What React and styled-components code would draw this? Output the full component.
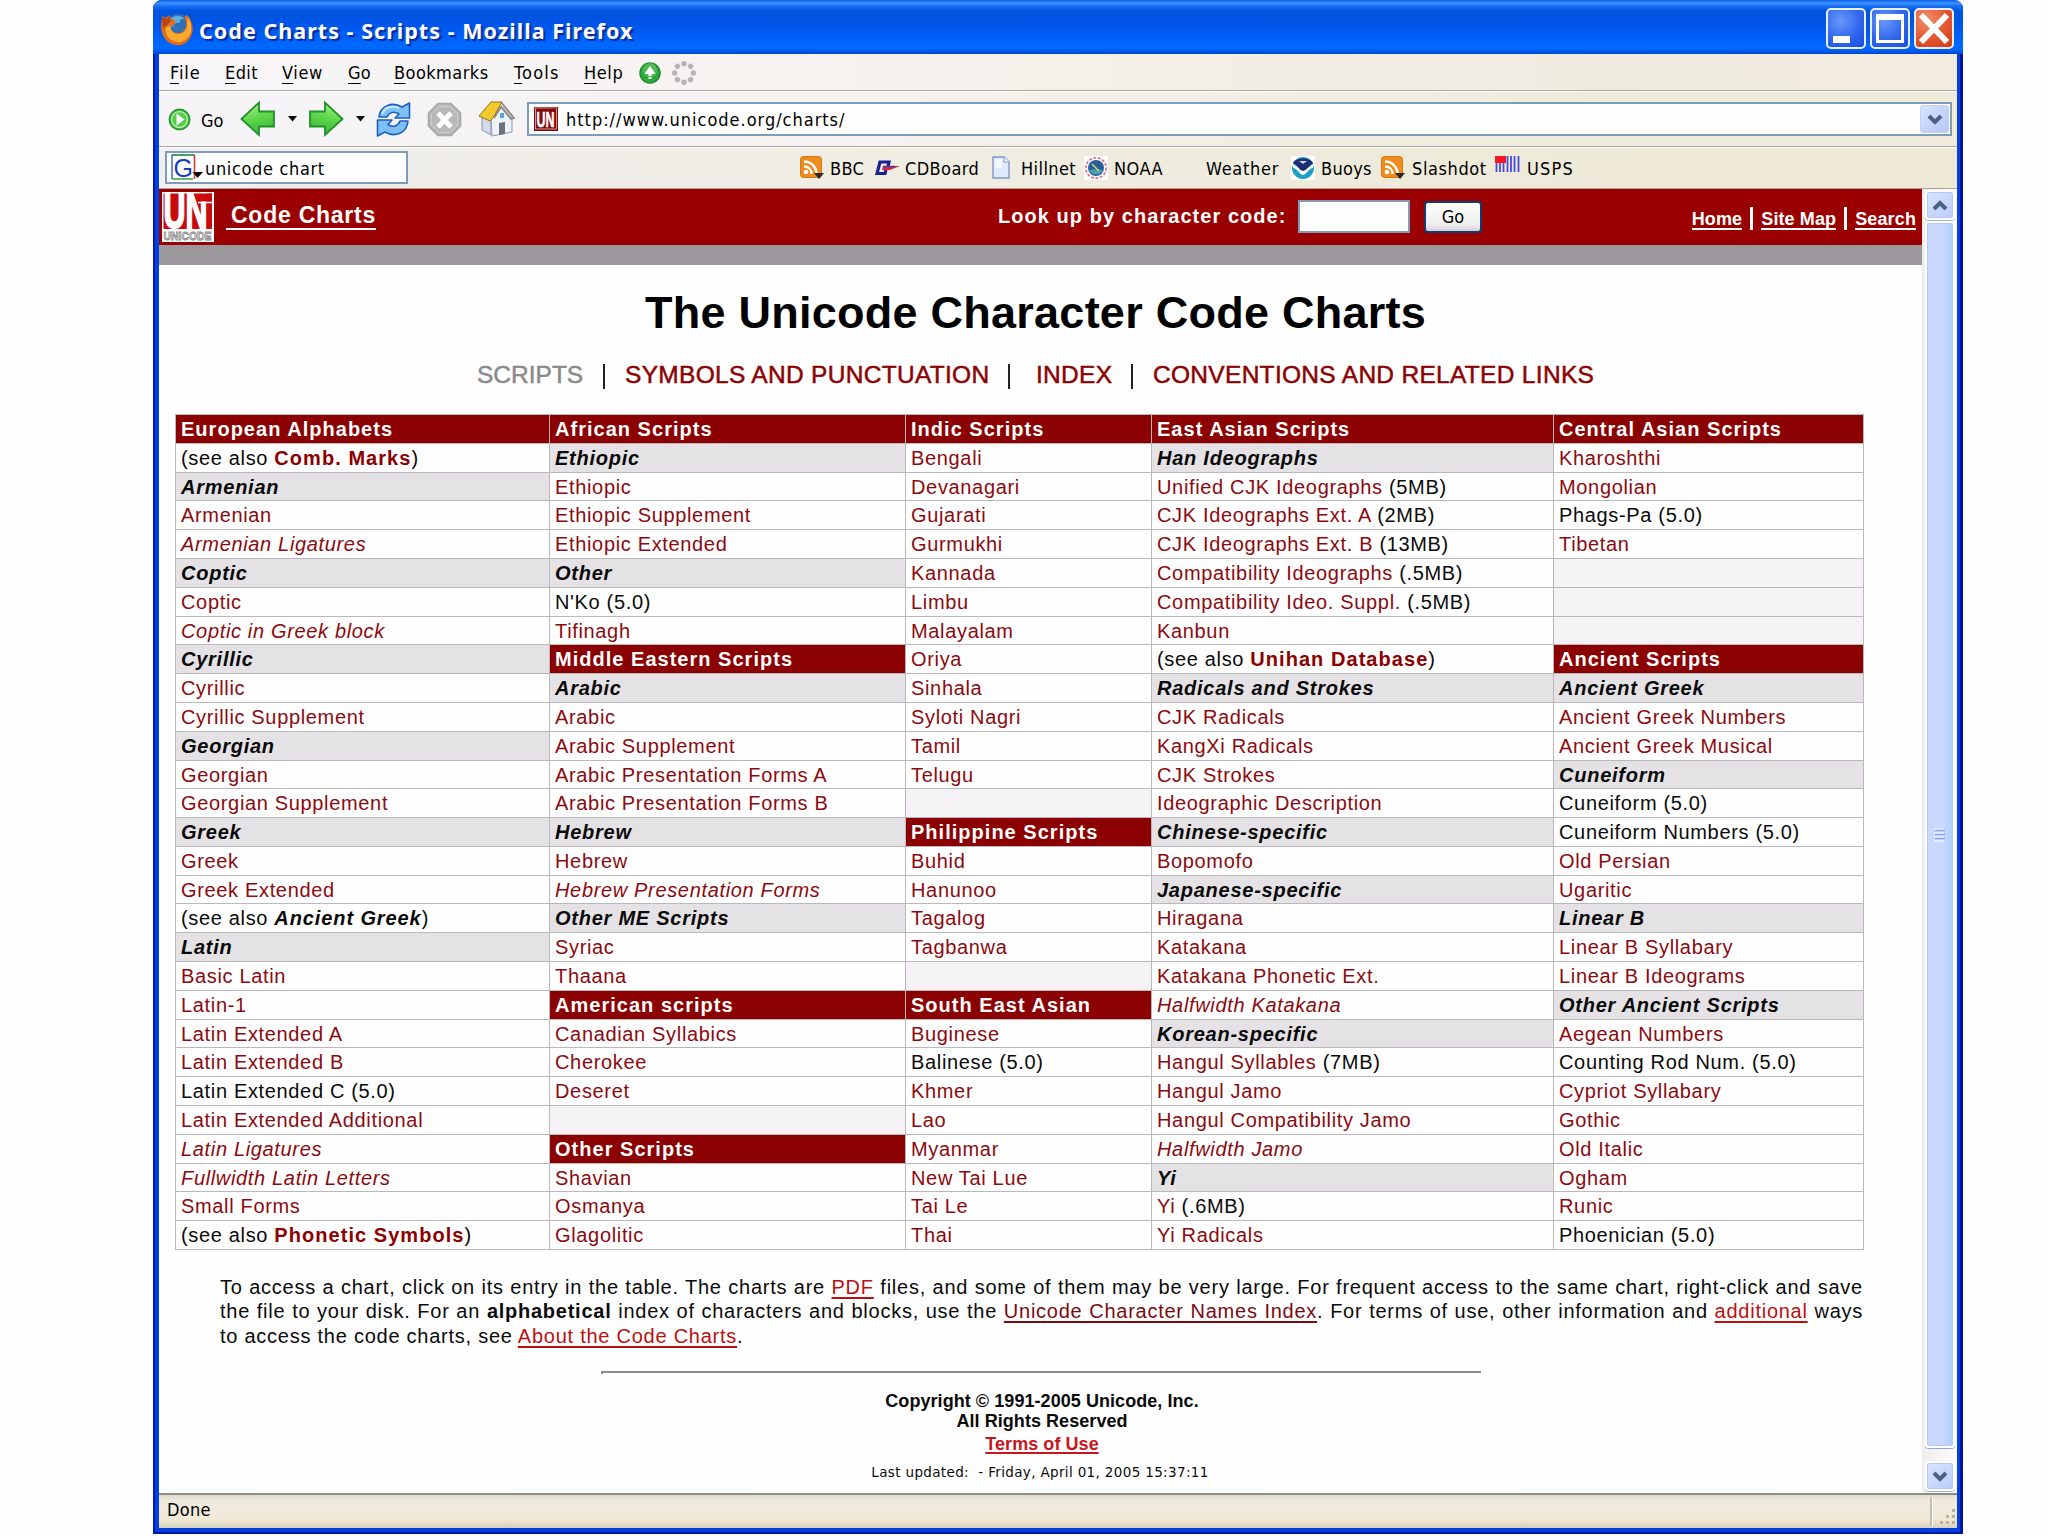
import React from 'react';
import styled, { createGlobalStyle, css } from 'styled-components';

const GlobalStyle = createGlobalStyle`
    body {
        margin: 0;
        background: #fefefe;
    }

    * {
        box-sizing: border-box;
    }

    svg {
        overflow: visible;
    }
`;

const UI_FONT = "'DejaVu Sans Condensed', 'DejaVu Sans', sans-serif";
const PAGE_FONT = "'Liberation Sans', Arial, sans-serif";

/* Window frame */

const Desktop = styled.div`
    width: 2048px;
    height: 1536px;
    overflow: hidden;
    padding: 0 85px 2px 153px;
    background: #fefefe;
`;

const Window = styled.div`
    display: flex;
    flex-direction: column;
    height: 1534px;
    padding: 0 6px 6px;
    border-radius: 9px 9px 0 0;
    overflow: hidden;
    background: #0440dc;
    box-shadow: inset 2px 0 0 #0119b4, inset -3px -2px 0 #0014a4;
`;

const TitleBar = styled.div`
    display: flex;
    align-items: center;
    flex: none;
    height: 54px;
    margin: 0 -6px;
    padding: 4px 9px 0 8px;
    background: linear-gradient(
        #0a5be8 0,
        #3b93ff 3px,
        #1a70f5 6px,
        #0054dc 11px,
        #0054e6 22px,
        #005cf5 34px,
        #0068ff 45px,
        #0066fb 49px,
        #0046d0 54px
    );
`;

const Title = styled.div`
    flex: 1;
    padding: 4px 0 0 6px;
    font: bold 21.5px/30px 'Noto Sans', sans-serif;
    letter-spacing: 1.03px;
    color: #fff;
    text-shadow: 2px 2px 1px #0a2a9a;
    white-space: pre;
`;

const WindowButtons = styled.div`
    display: flex;
    gap: 4px;
`;

const WindowButton = styled.div`
    width: 40px;
    height: 41px;
    margin-top: -1px;
    border: 2px solid #e8f0ff;
    border-radius: 5px;
    background: ${p =>
        p.$close
            ? 'radial-gradient(circle at 30% 25%, #f0906c, #e25530 55%, #cf3c10)'
            : 'radial-gradient(circle at 35% 30%, #6b97fa, #2f66ec 55%, #1a4fdc)'};
`;

/* Toolbars */

const MenuBar = styled.div`
    display: flex;
    align-items: center;
    flex: none;
    height: 36px;
    padding: 2px 0 0 11px;
    background: linear-gradient(90deg, #f8f5f9, #f5f2ee 40%, #f0ebdf 80%, #f1ebe0);
    font: 18px/22px ${UI_FONT};
`;

const MenuItem = styled.div`
    width: ${p => p.$width}px;
    letter-spacing: ${p => p.$spacing || 0}px;

    &::first-letter {
        text-decoration: underline;
        text-decoration-thickness: 1px;
        text-underline-offset: 4px;
    }
`;

const Spinner = styled.div`
    margin-left: 11px;
    height: 24px;
`;

const NavBar = styled.div`
    display: flex;
    align-items: center;
    flex: none;
    height: 56px;
    padding: 1px 5px 0 9px;
    border-top: 1px solid #a9a79c;
    box-shadow: inset 0 1px 0 #fff;
    background: linear-gradient(90deg, #f7f4f8, #f5f2ef 40%, #efead9 85%);
    font: 18px/22px ${UI_FONT};
`;

const GoLabel = styled.span`
    width: 39px;
    margin-left: 10px;
    padding-top: 3px;
`;

const NavIcon = styled.div`
    display: flex;
    width: ${p => p.$width}px;
`;

const UrlField = styled.div`
    display: flex;
    align-items: center;
    flex: 1;
    height: 34px;
    padding: 0 3px 0 5px;
    border: 2px solid #7f9db9;
    background: #fefefe;
`;

const Url = styled.span`
    flex: 1;
    padding: 1px 0 0 8px;
    letter-spacing: 0.98px;
`;

const DropButton = styled.div`
    display: flex;
    align-items: center;
    justify-content: center;
    width: 29px;
    height: 28px;
    margin-right: -2px;
    border-radius: 3px;
    background: linear-gradient(135deg, #d6e2ff, #b7c8f6);
    border: 1px solid #c3d1f5;
`;

const BookmarksBar = styled.div`
    display: flex;
    align-items: center;
    flex: none;
    height: 43px;
    padding: 0 0 0 6px;
    border-top: 1px solid #a9a79c;
    border-bottom: 1px solid #b3a294;
    box-shadow: inset 0 1px 0 #fff;
    background: linear-gradient(90deg, #f1eff0, #efece0 50%, #eee9d6 90%);
    font: 18px/22px ${UI_FONT};
`;

const SearchBox = styled.div`
    display: flex;
    align-items: center;
    width: 243px;
    height: 33px;
    margin-right: 392px;
    padding-left: 4px;
    border: 2px solid #7f9db9;
    background: #fefefe;
`;

const SearchText = styled.span`
    padding: 2px 0 0 1px;
    letter-spacing: 0.65px;
`;

const Bookmark = styled.div`
    display: flex;
    align-items: center;
    width: ${p => p.$width}px;
    white-space: nowrap;

    svg {
        flex: none;
    }
`;

const BookmarkLabel = styled.span`
    margin-left: ${p => p.$gap}px;
    padding-top: 2px;
    letter-spacing: ${p => p.$spacing || 0}px;
`;

/* Page */

const Viewport = styled.div`
    display: flex;
    flex: none;
    height: 1304px;
    background: #fefefe;
    font-family: ${PAGE_FONT};
`;

const Page = styled.div`
    width: 1763px;
`;

const Banner = styled.div`
    display: flex;
    align-items: flex-start;
    height: 56px;
    padding: 3px 6px 0 3px;
    background: #9b0000;
    color: #fff;
    font-weight: bold;
`;

const BannerTitle = styled.a`
    width: 772px;
    margin: 9px 0 0 12px;
    font-size: 23px;
    line-height: 28px;
    letter-spacing: 0.75px;

    span {
        display: inline-block;
        height: 29px;
        padding: 0 0 0 5px;
        border-bottom: 2px solid #fff;
    }
`;

const LookupLabel = styled.label`
    width: 300px;
    margin-top: 10px;
    font-size: 20px;
    line-height: 28px;
    letter-spacing: 1.05px;
    white-space: nowrap;
`;

const LookupInput = styled.div`
    width: 112px;
    height: 33px;
    margin: 8px 14px 0 0;
    border: 2px solid #7f9db9;
    background: #fefefe;
`;

const LookupButton = styled.div`
    width: 58px;
    height: 32px;
    margin: 9px 0 0;
    border: 2px solid #123c70;
    border-radius: 4px;
    background: linear-gradient(#fefefe, #f0eff0 75%, #d3cfd8);
    color: #000;
    font: 18px/28px ${UI_FONT};
    text-align: center;
`;

const BannerLinks = styled.div`
    display: flex;
    flex: 1;
    justify-content: flex-end;
    margin-top: 15px;
    font-size: 18px;
    line-height: 24px;
    letter-spacing: 0.12px;

    a {
        height: 23px;
        border-bottom: 2px solid #fff;
    }

    i {
        width: 3px;
        height: 23px;
        margin: 0 8px;
        background: #fff;
    }
`;

const GreyStrip = styled.div`
    height: 20px;
    background: #9a989b;
`;

const Heading = styled.h1`
    margin: 20px 0 0;
    font-size: 45px;
    line-height: 56px;
    letter-spacing: 0.25px;
    text-align: center;
    text-indent: -10px;
`;

const Sections = styled.nav`
    display: flex;
    height: 30px;
    margin: 18px 0 25px 318px;
    font-size: 24.5px;
    line-height: 31px;
    white-space: nowrap;
`;

const Section = styled.a`
    width: ${p => p.$width}px;
    letter-spacing: ${p => p.$spacing}px;
    color: ${p => (p.$current ? '#8b898c' : '#8a0305')};
    -webkit-text-stroke: 0.5px;
`;

const Bar = styled.i`
    width: 2px;
    height: 25px;
    margin: 5px ${p => (p.$wide ? 26 : 20)}px 0 0;
    background: #222;
`;

const Charts = styled.div`
    display: grid;
    grid-template-columns: 374px 356px 246px 402px 310px;
    width: 1689px;
    height: 836px;
    margin-left: 16px;
    border-left: 1px solid #bab8ba;
    border-top: 1px solid #bab8ba;
`;

const Column = styled.div`
    display: grid;
    grid-template-rows: repeat(29, 1fr);
    min-height: 0;
`;

const kinds = {
    head: css`
        background: #8b0000;
        color: #fff;
        font-weight: bold;
        letter-spacing: 1.02px;
    `,
    group: css`
        background: #e4e2e5;
        color: #0a0a0a;
        font-weight: bold;
        font-style: italic;
        letter-spacing: 0.75px;
    `,
    link: css`
        color: #8b0a10;
    `,
    slanted: css`
        color: #8b0a10;
        font-style: italic;
    `,
    plain: css`
        color: #0a0a0a;
    `,
    empty: css`
        background: #f5f2f5;
    `,
};

const Cell = styled.div`
    min-height: 0;
    padding-left: 5px;
    border-right: 1px solid #bab8ba;
    border-bottom: 1px solid #bab8ba;
    font-size: 20px;
    line-height: 28px;
    letter-spacing: 0.66px;
    white-space: pre;
    overflow: hidden;
    ${p => kinds[p.$kind]}
`;

const Note = styled.span`
    color: #0a0a0a;
`;

const SeeAlso = styled.b`
    color: ${p => (p.$current ? '#0a0a0a' : '#8b0000')};
    font-style: ${p => (p.$current ? 'italic' : 'normal')};
    letter-spacing: ${p => (p.$current ? 0.9 : 1.05)}px;
`;

const Intro = styled.div`
    width: 1643px;
    margin: 25px 0 0 61px;
    font-size: 20px;
    letter-spacing: 0.75px;
    color: #0a0a0a;
`;

const Line = styled.div`
    height: 24.3px;
    line-height: 24px;
    white-space: nowrap;
    text-align: justify;
    text-align-last: ${p => (p.$last ? 'left' : 'justify')};
`;

const TextLink = styled.a`
    color: ${p => (p.$visited ? '#7a0a10' : '#bb1010')};
    text-decoration: underline;
    text-decoration-thickness: 2px;
    text-underline-offset: 3px;
`;

const Rule = styled.div`
    width: 880px;
    height: 3px;
    margin: 23px 0 0 442px;
    border-top: 2px solid #8d8b8d;
    border-left: 2px solid #8d8b8d;
`;

const Footer = styled.footer`
    margin: 17px 0 0 883px;
    width: 0;
    display: flex;
    flex-direction: column;
    align-items: center;
    white-space: pre;
    font-size: 18px;
    font-weight: bold;
    line-height: 20px;
    letter-spacing: 0.06px;
    color: #0a0a0a;
`;

const Terms = styled.a`
    margin-top: 3px;
    color: #c8141c;
    text-decoration: underline;
    text-decoration-thickness: 2px;
    text-underline-offset: 2px;
`;

const Updated = styled.div`
    margin: 8px 0 0 -4px;
    font: 13.5px/20px 'DejaVu Sans', sans-serif;
    letter-spacing: 0.35px;
`;

/* Scrollbar and status bar */

const ScrollBar = styled.div`
    display: flex;
    flex-direction: column;
    width: 35px;
    padding: 1px 2px 1px 3px;
    background: linear-gradient(90deg, #efedec, #fdfcfb);
`;

const ScrollButton = styled.div`
    display: flex;
    align-items: center;
    justify-content: center;
    flex: none;
    height: 30px;
    border: 2px solid #fff;
    border-radius: 4px;
    box-shadow: inset 0 0 0 1px #b4c8f6, 0 1px 0 #9fb5e2;
    background: linear-gradient(135deg, #d9e4ff, #b9cbf9);
`;

const ScrollThumb = styled.div`
    display: flex;
    align-items: center;
    justify-content: center;
    height: 1227px;
    margin: 1px 0 13px;
    border: 2px solid #fff;
    border-radius: 4px;
    box-shadow: inset 0 0 0 1px #b4c8f6, 0 1px 0 #8fa8dc;
    background: linear-gradient(90deg, #cad8ff 55%, #b4d0fe 92%, #b9c9f2);
`;

const StatusBar = styled.div`
    display: flex;
    flex: 1;
    justify-content: space-between;
    padding-left: 8px;
    border-top: 2px solid #8f8d88;
    background: linear-gradient(#e2dbcb 0, #f1ebdf 6px, #f0e9d8 24px, #d9d0b8);
    font: 18px/30px ${UI_FONT};
`;

const StatusText = styled.span`
    letter-spacing: 0.3px;
`;

const Grip = styled.div`
    display: flex;
    align-items: flex-end;
    justify-content: flex-end;
    width: 27px;
    margin: 2px 0;
    border-left: 2px solid #c4bfae;
    box-shadow: inset 1px 0 0 #fff;
`;

const head = text => ['head', text];
const group = text => ['group', text];
const link = (text, note) => ['link', text, note];
const slanted = text => ['slanted', text];
const plain = text => ['plain', text];
const see = (text, current) => ['plain', '(see also ', null, text, current];
const empty = () => ['empty', ''];

const COLUMNS = [
    [
        head('European Alphabets'),
        see('Comb. Marks'),
        group('Armenian'),
        link('Armenian'),
        slanted('Armenian Ligatures'),
        group('Coptic'),
        link('Coptic'),
        slanted('Coptic in Greek block'),
        group('Cyrillic'),
        link('Cyrillic'),
        link('Cyrillic Supplement'),
        group('Georgian'),
        link('Georgian'),
        link('Georgian Supplement'),
        group('Greek'),
        link('Greek'),
        link('Greek Extended'),
        see('Ancient Greek', true),
        group('Latin'),
        link('Basic Latin'),
        link('Latin-1'),
        link('Latin Extended A'),
        link('Latin Extended B'),
        plain('Latin Extended C (5.0)'),
        link('Latin Extended Additional'),
        slanted('Latin Ligatures'),
        slanted('Fullwidth Latin Letters'),
        link('Small Forms'),
        see('Phonetic Symbols'),
    ],
    [
        head('African Scripts'),
        group('Ethiopic'),
        link('Ethiopic'),
        link('Ethiopic Supplement'),
        link('Ethiopic Extended'),
        group('Other'),
        plain("N'Ko (5.0)"),
        link('Tifinagh'),
        head('Middle Eastern Scripts'),
        group('Arabic'),
        link('Arabic'),
        link('Arabic Supplement'),
        link('Arabic Presentation Forms A'),
        link('Arabic Presentation Forms B'),
        group('Hebrew'),
        link('Hebrew'),
        slanted('Hebrew Presentation Forms'),
        group('Other ME Scripts'),
        link('Syriac'),
        link('Thaana'),
        head('American scripts'),
        link('Canadian Syllabics'),
        link('Cherokee'),
        link('Deseret'),
        empty(),
        head('Other Scripts'),
        link('Shavian'),
        link('Osmanya'),
        link('Glagolitic'),
    ],
    [
        head('Indic Scripts'),
        link('Bengali'),
        link('Devanagari'),
        link('Gujarati'),
        link('Gurmukhi'),
        link('Kannada'),
        link('Limbu'),
        link('Malayalam'),
        link('Oriya'),
        link('Sinhala'),
        link('Syloti Nagri'),
        link('Tamil'),
        link('Telugu'),
        empty(),
        head('Philippine Scripts'),
        link('Buhid'),
        link('Hanunoo'),
        link('Tagalog'),
        link('Tagbanwa'),
        empty(),
        head('South East Asian'),
        link('Buginese'),
        plain('Balinese (5.0)'),
        link('Khmer'),
        link('Lao'),
        link('Myanmar'),
        link('New Tai Lue'),
        link('Tai Le'),
        link('Thai'),
    ],
    [
        head('East Asian Scripts'),
        group('Han Ideographs'),
        link('Unified CJK Ideographs', '(5MB)'),
        link('CJK Ideographs Ext. A', '(2MB)'),
        link('CJK Ideographs Ext. B', '(13MB)'),
        link('Compatibility Ideographs', '(.5MB)'),
        link('Compatibility Ideo. Suppl.', '(.5MB)'),
        link('Kanbun'),
        see('Unihan Database'),
        group('Radicals and Strokes'),
        link('CJK Radicals'),
        link('KangXi Radicals'),
        link('CJK Strokes'),
        link('Ideographic Description'),
        group('Chinese-specific'),
        link('Bopomofo'),
        group('Japanese-specific'),
        link('Hiragana'),
        link('Katakana'),
        link('Katakana Phonetic Ext.'),
        slanted('Halfwidth Katakana'),
        group('Korean-specific'),
        link('Hangul Syllables', '(7MB)'),
        link('Hangul Jamo'),
        link('Hangul Compatibility Jamo'),
        slanted('Halfwidth Jamo'),
        group('Yi'),
        link('Yi', '(.6MB)'),
        link('Yi Radicals'),
    ],
    [
        head('Central Asian Scripts'),
        link('Kharoshthi'),
        link('Mongolian'),
        plain('Phags-Pa (5.0)'),
        link('Tibetan'),
        empty(),
        empty(),
        empty(),
        head('Ancient Scripts'),
        group('Ancient Greek'),
        link('Ancient Greek Numbers'),
        link('Ancient Greek Musical'),
        group('Cuneiform'),
        plain('Cuneiform (5.0)'),
        plain('Cuneiform Numbers (5.0)'),
        link('Old Persian'),
        link('Ugaritic'),
        group('Linear B'),
        link('Linear B Syllabary'),
        link('Linear B Ideograms'),
        group('Other Ancient Scripts'),
        link('Aegean Numbers'),
        plain('Counting Rod Num. (5.0)'),
        link('Cypriot Syllabary'),
        link('Gothic'),
        link('Old Italic'),
        link('Ogham'),
        link('Runic'),
        plain('Phoenician (5.0)'),
    ],
];

/* Icons */

const FirefoxIcon = () => (
    <svg width="32" height="33" viewBox="0 0 32 33">
        <circle cx="17" cy="14" r="13" fill="#2f6fb8" />
        <path d="M9 6C13 2 20 2 24 6C20 5 18 7 19 10C15 9 12 11 13 14L9 12Z" fill="#5fb0dc" />
        <path
            d="M1 3L5 5L8 2L10 6C13 6 15 8 14 11L10 13C9 17 12 20 17 20C23 20 26 15 25 9C23 5 24 2 26 2C31 7 33 15 31 21C28 29 22 33 15 32C6 31 0 23 0 13Z"
            fill="#e06a18"
        />
        <path
            d="M10 13C9 17 12 21 17 21C23 21 27 16 26 9L27 4C31 10 31 18 28 23C24 30 15 31 9 26C5 23 4 18 5 14Z"
            fill="#f9a92e"
        />
        <path d="M25 5C30 10 31 17 28 22C30 15 29 9 25 5Z" fill="#fde06a" />
        <path d="M1 4L6 6L8 3L10 8L6 12L2 15Z" fill="#b8441a" />
    </svg>
);

const MinimizeIcon = () => (
    <svg width="36" height="37">
        <rect x="5" y="26" width="17" height="7" fill="#fff" />
    </svg>
);

const MaximizeIcon = () => (
    <svg width="36" height="37">
        <path d="M4 4H32V33H4ZM7 10V30H29V10Z" fill="#fff" fillRule="evenodd" />
    </svg>
);

const CloseIcon = () => (
    <svg width="36" height="37">
        <path d="M5 5L31 32M31 5L5 32" stroke="#fff" strokeWidth="6" />
    </svg>
);

const UpdateIcon = () => (
    <svg width="22" height="22" viewBox="0 0 22 22">
        <circle cx="11" cy="11" r="10" fill="#2fa83c" stroke="#1d8a2b" strokeWidth="1.5" />
        <circle cx="11" cy="8" r="7" fill="#6fd06c" opacity="0.5" />
        <path d="M11 4L16.5 12H12.5V14H9.5V12H5.5Z" fill="#fff" />
        <rect x="9.5" y="15" width="3" height="2" fill="#fff" />
    </svg>
);

const SpinnerIcon = () => (
    <svg width="24" height="24" viewBox="-12 -12 24 24">
        {[0, 45, 90, 135, 180, 225, 270, 315].map(angle => (
            <circle key={angle} cy="-9.3" r="2.7" fill="#b6b3b2" transform={`rotate(${angle})`} />
        ))}
    </svg>
);

const PlayIcon = () => (
    <svg width="23" height="23" viewBox="0 0 23 23">
        <circle cx="11.5" cy="11.5" r="10.5" fill="#2fab2d" stroke="#23902a" />
        <circle cx="11.5" cy="11.5" r="8" fill="#58cc4c" stroke="#b6ecab" strokeWidth="1.5" />
        <path d="M8.5 5.5L16.5 11.5L8.5 17.5Z" fill="#fff" />
    </svg>
);

const ArrowIcon = ({ forward }) => (
    <svg width="36" height="36" viewBox="0 0 36 36">
        <defs>
            <linearGradient id="leaf" x1="0" y1="0" x2="0.3" y2="1">
                <stop offset="0" stopColor="#b9f09a" />
                <stop offset="0.55" stopColor="#5fd84b" />
                <stop offset="1" stopColor="#3fb93a" />
            </linearGradient>
        </defs>
        <path
            d="M1.5 18L19 1.5V10.5H34V25.5H19V34Z"
            fill="url(#leaf)"
            stroke="#1f9127"
            strokeWidth="1.8"
            transform={forward ? 'matrix(-1 0 0 1 36 0)' : undefined}
        />
    </svg>
);

const DropArrow = () => (
    <svg width="9" height="6">
        <path d="M0 0H9L4.5 5.5Z" fill="#0a0a0a" />
    </svg>
);

const ReloadIcon = () => (
    <svg width="35" height="35" viewBox="0 0 35 35">
        <g fill="#7cc0f5" stroke="#1e5fc4" strokeWidth="1.6" strokeLinejoin="round">
            <path d="M3 15C4 4 16-1 26 5L33.5 1V16H19L23 12C18 9 13 10 11 15Z" />
            <path d="M32 19C31 31 19 36 9 30L1.5 34V18H16L12 22.5C17 26 22 24 24 19Z" />
        </g>
        <path d="M6 12C9 5 16 3 23 6" fill="none" stroke="#c5e6ff" strokeWidth="2" />
    </svg>
);

const StopIcon = () => (
    <svg width="35" height="35" viewBox="0 0 35 35">
        <path
            d="M11 1.5H24L33.5 11V24L24 33.5H11L1.5 24V11Z"
            fill="#b9b7b8"
            stroke="#a8a6a7"
            strokeWidth="1.6"
        />
        <path d="M12 4.5H23L30.5 12V23L23 30.5H12L4.5 23V12Z" fill="none" stroke="#cfcdce" />
        <path d="M11 11L24 25M24 11L11 25" stroke="#fff" strokeWidth="5" />
    </svg>
);

const HomeIcon = () => (
    <svg width="37" height="36" viewBox="0 0 37 36">
        <path d="M13 17L24 5L34 17V31L14 35Z" fill="#eef2fa" stroke="#8d97ad" />
        <path d="M4 16L13 20V34L4 29Z" fill="#d3dbea" stroke="#8d97ad" />
        <path d="M1 15L13 1H24L15 17L12 20Z" fill="#f3c92f" stroke="#9b7413" />
        <path d="M23 1L36 17L33 18L23 6L16 17" fill="none" stroke="#8a8478" strokeWidth="1.6" />
        <rect x="22" y="12" width="4" height="5" fill="#5ba4e6" />
        <path d="M21 22L27 21V33L21 34Z" fill="#6e6f78" />
    </svg>
);

const UniFavicon = () => (
    <svg width="24" height="24" viewBox="0 0 24 24">
        <rect width="24" height="24" fill="#850808" />
        <rect x="1.5" y="1" width="21" height="21" fill="none" stroke="#e8d4d4" strokeWidth="0.7" />
        <text
            x="2.5"
            y="19.5"
            fontFamily={PAGE_FONT}
            fontSize="22"
            fontWeight="bold"
            fill="#fff"
            stroke="#fff"
            strokeWidth="0.6"
            textLength="18"
            lengthAdjust="spacingAndGlyphs"
        >
            UN
        </text>
        <path d="M18.5 1.5H22V5H18.5Z" fill="#850808" />
    </svg>
);

const Chevron = ({ up }) => (
    <svg width="16" height="11" viewBox="0 0 16 11">
        <path
            d={up ? 'M2 9L8 3L14 9' : 'M2 2L8 8L14 2'}
            fill="none"
            stroke="#4a6086"
            strokeWidth="4"
        />
    </svg>
);

const GoogleIcon = () => (
    <svg width="33" height="27" viewBox="0 0 33 27">
        <path d="M1 25V1H24" fill="none" stroke="#3f79c8" strokeWidth="1.6" />
        <path d="M1 25H22M1 1H23" fill="none" stroke="#38a045" strokeWidth="1.6" />
        <path d="M23.5 1V25" stroke="#d83a30" strokeWidth="1.6" />
        <text x="2.5" y="22.5" fontFamily={PAGE_FONT} fontSize="25" fill="#1c3fc0">
            G
        </text>
        <path d="M21.5 18H32L26.5 24Z" fill="#0a0a0a" />
    </svg>
);

const FeedIcon = () => (
    <svg width="24" height="24" viewBox="0 0 24 24">
        <rect x="0.5" y="0.5" width="21" height="21" rx="3" fill="#f08c1e" stroke="#d87610" />
        <path
            d="M4 5.5C11 5.5 16.5 11 16.5 18M4 10.5C8.5 10.5 11.500 13.5 11.5 18"
            fill="none"
            stroke="#fff"
            strokeWidth="2.4"
        />
        <circle cx="6" cy="16" r="2.3" fill="#fff" />
        <path d="M14 17H24L19 23Z" fill="#2b2620" />
    </svg>
);

const CDIcon = () => (
    <svg width="25" height="16" viewBox="0 0 25 16">
        <path d="M13 6L14 2H5L2 13.500H10L11 10" fill="none" stroke="#1c1f8c" strokeWidth="3.2" />
        <path d="M8 6H25L15 10H7Z" fill="#d8283c" />
        <path d="M8 6.5H20" stroke="#3a3fa8" strokeWidth="1.5" />
    </svg>
);

const PageIcon = () => (
    <svg width="18" height="23" viewBox="0 0 18 23">
        <path d="M1 1H12L17 6V22H1Z" fill="#dfeafc" stroke="#8296cc" strokeWidth="1.4" />
        <path d="M12 1V6H17" fill="#fff" stroke="#8296cc" />
        <path d="M3 3H10V12H3Z" fill="#fff" opacity="0.6" />
    </svg>
);

const NoaaIcon = () => (
    <svg width="24" height="24" viewBox="0 0 24 24">
        <rect width="24" height="24" fill="#fff" />
        <circle cx="12" cy="12" r="10.2" fill="none" stroke="#d67a94" strokeWidth="1.8" strokeDasharray="3 1.5" />
        <circle cx="12" cy="12" r="8" fill="#27609c" />
        <path d="M5 14C8 20 16 20 19 14L12 13Z" fill="#4a9fb0" />
        <path d="M8 8L15 15" stroke="#e0cc60" strokeWidth="1.5" />
    </svg>
);

const BuoyIcon = () => (
    <svg width="24" height="24" viewBox="0 0 24 24">
        <rect width="24" height="24" fill="#fff" />
        <circle cx="12" cy="12" r="11" fill="#1f9fc6" />
        <path d="M2 7C5 1 19 1 22 7C19 9 16 13 12 18C9 13 6 9 2 7Z" fill="#1f2c74" />
        <path d="M1 8C6 9 8 14 12 15C16 14 19 9 23 8L22 12C18 12 16 18 12 19C8 18 6 12 2 12Z" fill="#fff" />
        <path d="M8 5H16L12 8Z" fill="#fff" opacity="0.8" />
    </svg>
);

const UspsIcon = () => (
    <svg width="26" height="24" viewBox="0 0 26 24">
        <path
            d="M1.5 4V16M5 4V16M8.5 4V16M12.5 0V16M16 0V16M19.5 0V16M23.5 0V16"
            stroke="#4a4ce0"
            strokeWidth="1.8"
        />
        <rect width="11" height="7" fill="#f81820" />
    </svg>
);

const UnicodeLogo = () => (
    <svg width="52" height="50" viewBox="0 0 52 50">
        <rect width="52" height="50" fill="#fdfdfd" />
        <rect x="1.5" y="1.5" width="48.5" height="35.5" fill="#c80a0e" />
        <text
            x="1.5"
            y="36"
            fontFamily={PAGE_FONT}
            fontSize="50"
            fontWeight="bold"
            fill="#fdfdfd"
            stroke="#fdfdfd"
            strokeWidth="2"
            textLength="44"
            lengthAdjust="spacingAndGlyphs"
        >
            UN
        </text>
        <path d="M37.5 1.5H50V9.5H37.500Z" fill="#c80a0e" />
        <path d="M36 10.5H50" stroke="#fdfdfd" strokeWidth="1.5" />
        <path d="M1 37H51V49H1Z" fill="#fdfdfd" />
        <text
            x="1.5"
            y="47.5"
            fontFamily={PAGE_FONT}
            fontSize="11.5"
            fill="#fdfdfd"
            stroke="#8c8a8c"
            strokeWidth="0.9"
            textLength="48"
            lengthAdjust="spacingAndGlyphs"
        >
            UNICODE
        </text>
    </svg>
);

const ThumbGrip = () => (
    <svg width="12" height="14" viewBox="0 0 12 14">
        <path d="M0 1H10M0 5H10M0 9H10M0 13H10" stroke="#eef4ff" strokeWidth="1.5" />
        <path d="M1 2.5H11M1 6.5H11M1 10.5H11" stroke="#8fabe6" strokeWidth="1.5" />
    </svg>
);

const GripIcon = () => (
    <svg width="18" height="18" viewBox="0 0 18 18">
        <path
            d="M13 1H16V4H13ZM7 7H10V10H7ZM13 7H16V10H13ZM1 13H4V16H1ZM7 13H10V16H7ZM13 13H16V16H13Z"
            fill="#b9b29c"
        />
    </svg>
);

const MENU = [
    ['File', 55, 0.9],
    ['Edit', 57, 0.4],
    ['View', 66, 0.6],
    ['Go', 46, 0.2],
    ['Bookmarks', 120, 0.45],
    ['Tools', 70, 1.2],
    ['Help', 55, 0.6],
];

const BOOKMARKS = [
    ['BBC', 75, FeedIcon, 6, 0.3],
    ['CDBoard', 117, CDIcon, 5, 0.4],
    ['Hillnet', 92, PageIcon, 11, 0.4],
    ['NOAA', 92, NoaaIcon, 6, 0.5],
    ['Weather', 115, null, 30, 0.7],
    ['Buoys', 90, BuoyIcon, 6, 0.3],
    ['Slashdot', 114, FeedIcon, 7, 0.6],
    ['USPS', 90, UspsIcon, 6, 1.2],
];

function ChartCell({ cell }) {
    const [kind, text, note, target, current] = cell;

    return (
        <Cell $kind={kind}>
            {text}
            {note && <Note> {note}</Note>}
            {target && <SeeAlso $current={current}>{target}</SeeAlso>}
            {target && ')'}
        </Cell>
    );
}

function Toolbars() {
    return (
        <>
            <MenuBar>
                {MENU.map(([label, width, spacing]) => (
                    <MenuItem key={label} $width={width} $spacing={spacing}>
                        {label}
                    </MenuItem>
                ))}
                <UpdateIcon />
                <Spinner>
                    <SpinnerIcon />
                </Spinner>
            </MenuBar>
            <NavBar>
                <PlayIcon />
                <GoLabel>Go</GoLabel>
                <NavIcon $width={48}>
                    <ArrowIcon />
                </NavIcon>
                <NavIcon $width={20}>
                    <DropArrow />
                </NavIcon>
                <NavIcon $width={48}>
                    <ArrowIcon forward />
                </NavIcon>
                <NavIcon $width={20}>
                    <DropArrow />
                </NavIcon>
                <NavIcon $width={51}>
                    <ReloadIcon />
                </NavIcon>
                <NavIcon $width={51}>
                    <StopIcon />
                </NavIcon>
                <NavIcon $width={49}>
                    <HomeIcon />
                </NavIcon>
                <UrlField>
                    <UniFavicon />
                    <Url>http://www.unicode.org/charts/</Url>
                    <DropButton>
                        <Chevron />
                    </DropButton>
                </UrlField>
            </NavBar>
            <BookmarksBar>
                <SearchBox>
                    <GoogleIcon />
                    <SearchText>unicode chart</SearchText>
                </SearchBox>
                {BOOKMARKS.map(([label, width, Icon, gap, spacing]) => (
                    <Bookmark key={label} $width={width}>
                        {Icon && <Icon />}
                        <BookmarkLabel $gap={gap} $spacing={spacing}>
                            {label}
                        </BookmarkLabel>
                    </Bookmark>
                ))}
            </BookmarksBar>
        </>
    );
}

function ChartsPage() {
    return (
        <Page>
            <Banner>
                <UnicodeLogo />
                <BannerTitle>
                    <span>Code Charts</span>
                </BannerTitle>
                <LookupLabel>Look up by character code:</LookupLabel>
                <LookupInput />
                <LookupButton>Go</LookupButton>
                <BannerLinks>
                    <a>Home</a>
                    <i />
                    <a>Site Map</a>
                    <i />
                    <a>Search</a>
                </BannerLinks>
            </Banner>
            <GreyStrip />
            <Heading>The Unicode Character Code Charts</Heading>
            <Sections>
                <Section $current $width={126} $spacing={0}>
                    SCRIPTS
                </Section>
                <Bar />
                <Section $width={383} $spacing={0.3}>
                    SYMBOLS AND PUNCTUATION
                </Section>
                <Bar $wide />
                <Section $width={95} $spacing={0.3}>
                    INDEX
                </Section>
                <Bar />
                <Section $width={450} $spacing={0.3}>
                    CONVENTIONS AND RELATED LINKS
                </Section>
            </Sections>
            <Charts>
                {COLUMNS.map((cells, column) => (
                    <Column key={column}>
                        {cells.map((cell, row) => (
                            <ChartCell key={row} cell={cell} />
                        ))}
                    </Column>
                ))}
            </Charts>
            <Intro>
                <Line>
                    To access a chart, click on its entry in the table. The charts are <TextLink>PDF</TextLink> files,
                    and some of them may be very large. For frequent access to the same chart, right-click and save
                </Line>
                <Line>
                    the file to your disk. For an <b>alphabetical</b> index of characters and blocks, use the{' '}
                    <TextLink $visited>Unicode Character Names Index</TextLink>. For terms of use, other information
                    and <TextLink>additional</TextLink> ways
                </Line>
                <Line $last>
                    to access the code charts, see <TextLink>About the Code Charts</TextLink>.
                </Line>
            </Intro>
            <Rule />
            <Footer>
                <div>Copyright © 1991-2005 Unicode, Inc.</div>
                <div>All Rights Reserved</div>
                <Terms>Terms of Use</Terms>
                <Updated>{'Last updated:  - Friday, April 01, 2005 15:37:11'}</Updated>
            </Footer>
        </Page>
    );
}

export default function App() {
    return (
        <Desktop>
            <GlobalStyle />
            <Window>
                <TitleBar>
                    <FirefoxIcon />
                    <Title>Code Charts - Scripts - Mozilla Firefox</Title>
                    <WindowButtons>
                        <WindowButton>
                            <MinimizeIcon />
                        </WindowButton>
                        <WindowButton>
                            <MaximizeIcon />
                        </WindowButton>
                        <WindowButton $close>
                            <CloseIcon />
                        </WindowButton>
                    </WindowButtons>
                </TitleBar>
                <Toolbars />
                <Viewport>
                    <ChartsPage />
                    <ScrollBar>
                        <ScrollButton>
                            <Chevron up />
                        </ScrollButton>
                        <ScrollThumb>
                            <ThumbGrip />
                        </ScrollThumb>
                        <ScrollButton>
                            <Chevron />
                        </ScrollButton>
                    </ScrollBar>
                </Viewport>
                <StatusBar>
                    <StatusText>Done</StatusText>
                    <Grip>
                        <GripIcon />
                    </Grip>
                </StatusBar>
            </Window>
        </Desktop>
    );
}
